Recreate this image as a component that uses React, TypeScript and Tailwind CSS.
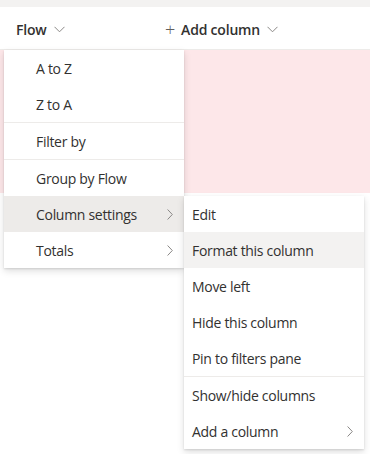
import React from "react";

const font = { fontFamily: '"Segoe UI", "Open Sans", "Liberation Sans", sans-serif' };

const ChevronDown = () => (
  <svg width="11" height="7" viewBox="0 0 11 7" className="ml-[7px] mt-[1px]">
    <path d="M0.5 0.8 L5.5 5.8 L10.5 0.8" fill="none" stroke="#8a8886" strokeWidth="1" />
  </svg>
);

const ChevronRight = () => (
  <svg width="6" height="11" viewBox="0 0 6 11">
    <path d="M0.6 0.5 L5.3 5.5 L0.6 10.5" fill="none" stroke="#8a8886" strokeWidth="1" />
  </svg>
);

type Item = { label: string; sub?: boolean; active?: "expanded" | "hover"; divider?: boolean };

const mainItems: Item[] = [
  { label: "A to Z" },
  { label: "Z to A", divider: true },
  { label: "Filter by", divider: true },
  { label: "Group by Flow" },
  { label: "Column settings", sub: true, active: "expanded" },
  { label: "Totals", sub: true },
];

const subItems: Item[] = [
  { label: "Edit" },
  { label: "Format this column", active: "hover" },
  { label: "Move left" },
  { label: "Hide this column" },
  { label: "Pin to filters pane", divider: true },
  { label: "Show/hide columns" },
  { label: "Add a column", sub: true },
];

const Menu = ({ items, indent }: { items: Item[]; indent: string }) => (
  <div className="w-[180px] bg-white shadow-[0_3.2px_7.2px_rgba(0,0,0,0.132),0_0.6px_1.8px_rgba(0,0,0,0.108)]">
    {items.map((it) => (
      <div key={it.label}>
        <div
          className={`flex h-9 items-center justify-between pr-[11px] text-[14px] tracking-[-0.3px] text-[#323130] ${indent} ${
            it.active === "expanded" ? "bg-[#edebe9]" : it.active === "hover" ? "bg-[#f3f2f1]" : ""
          }`}
        >
          <span>{it.label}</span>
          {it.sub && <ChevronRight />}
        </div>
        {it.divider && <div className="h-px bg-[#edebe9]" />}
      </div>
    ))}
  </div>
);

export default function App() {
  return (
    <div className="relative h-[454px] w-[370px] overflow-hidden bg-white" style={font}>
      <div className="h-[7px] bg-[#f3f2f1]" />
      <div className="flex h-[43px] items-center border-b border-[#edebe9] pt-[2px] text-[14px] tracking-[-0.2px] text-[#323130]">
        <div className="flex w-[165px] items-center pl-4 font-semibold">
          Flow
          <ChevronDown />
        </div>
        <div className="flex items-center font-semibold">
          <span className="mr-[6px] text-[18px] font-light leading-none text-[#605e5c]">+</span>
          Add column
          <ChevronDown />
        </div>
      </div>
      <div className="h-[143px] bg-[#fde7e9]" />

      <div className="absolute left-1 top-[50px]">
        <Menu items={mainItems} indent="pl-8" />
      </div>
      <div className="absolute left-[184px] top-[196px]">
        <Menu items={subItems} indent="pl-2" />
      </div>
    </div>
  );
}
